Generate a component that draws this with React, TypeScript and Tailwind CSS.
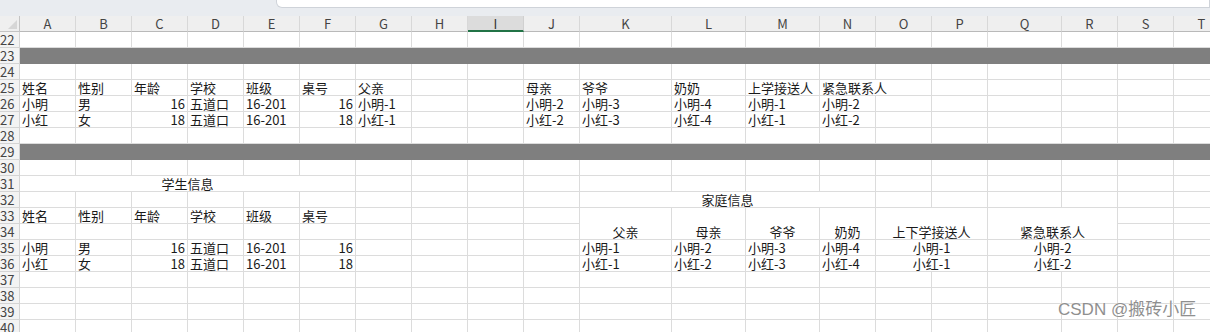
import React from 'react';

type Align = 'l' | 'r' | 'c';
type Merge = { c: number; span: number; rspan?: number; t?: string; align?: Align; fill?: boolean };

const LETTERS = ['A', 'B', 'C', 'D', 'E', 'F', 'G', 'H', 'I', 'J', 'K', 'L', 'M', 'N', 'O', 'P', 'Q', 'R', 'S', 'T'];

// plain cell values, row -> [col, text, align]
const values: Record<number, [number, string, Align?][]> = {
  25: [
    [0, '姓名'], [1, '性别'], [2, '年龄'], [3, '学校'], [4, '班级'], [5, '桌号'], [6, '父亲'],
    [9, '母亲'], [10, '爷爷'], [11, '奶奶'], [12, '上学接送人'], [13, '紧急联系人'],
  ],
  26: [
    [0, '小明'], [1, '男'], [2, '16', 'r'], [3, '五道口'], [4, '16-201'], [5, '16', 'r'], [6, '小明-1'],
    [9, '小明-2'], [10, '小明-3'], [11, '小明-4'], [12, '小明-1'], [13, '小明-2'],
  ],
  27: [
    [0, '小红'], [1, '女'], [2, '18', 'r'], [3, '五道口'], [4, '16-201'], [5, '18', 'r'], [6, '小红-1'],
    [9, '小红-2'], [10, '小红-3'], [11, '小红-4'], [12, '小红-1'], [13, '小红-2'],
  ],
  33: [[0, '姓名'], [1, '性别'], [2, '年龄'], [3, '学校'], [4, '班级'], [5, '桌号']],
  35: [
    [0, '小明'], [1, '男'], [2, '16', 'r'], [3, '五道口'], [4, '16-201'], [5, '16', 'r'],
    [10, '小明-1'], [11, '小明-2'], [12, '小明-3'], [13, '小明-4'],
  ],
  36: [
    [0, '小红'], [1, '女'], [2, '18', 'r'], [3, '五道口'], [4, '16-201'], [5, '18', 'r'],
    [10, '小红-1'], [11, '小红-2'], [12, '小红-3'], [13, '小红-4'],
  ],
};

const merges: Record<number, Merge[]> = {
  23: [{ c: 0, span: 20, fill: true }],
  29: [{ c: 0, span: 20, fill: true }],
  31: [{ c: 0, span: 6, t: '学生信息', align: 'c' }],
  32: [{ c: 10, span: 4, t: '家庭信息', align: 'c' }],
  33: [
    { c: 10, span: 1, rspan: 2, t: '父亲', align: 'c' },
    { c: 11, span: 1, rspan: 2, t: '母亲', align: 'c' },
    { c: 12, span: 1, rspan: 2, t: '爷爷', align: 'c' },
    { c: 13, span: 1, rspan: 2, t: '奶奶', align: 'c' },
    { c: 14, span: 2, rspan: 2, t: '上下学接送人', align: 'c' },
    { c: 16, span: 2, rspan: 2, t: '紧急联系人', align: 'c' },
  ],
  35: [
    { c: 14, span: 2, t: '小明-1', align: 'c' },
    { c: 16, span: 2, t: '小明-2', align: 'c' },
  ],
  36: [
    { c: 14, span: 2, t: '小红-1', align: 'c' },
    { c: 16, span: 2, t: '小红-2', align: 'c' },
  ],
};

const colSpan: Record<number, string> = { 1: '', 2: 'col-span-2', 4: 'col-span-4', 6: 'col-span-6', 20: 'col-span-20' };
const justify: Record<Align, string> = { l: 'justify-start', r: 'justify-end', c: 'justify-center' };

function Cell({ t, align = 'l', span = 1, rspan, fill }: { t?: string; align?: Align; span?: number; rspan?: number; fill?: boolean }) {
  return (
    <div
      className={`flex items-end px-[2px] whitespace-nowrap border-r border-b ${colSpan[span]} ${rspan === 2 ? 'row-span-2' : ''} ${
        fill ? 'bg-[#7f7f7f] border-[#7f7f7f]' : 'border-[#dcdcdc]'
      } ${justify[align]}`}
    >
      {t && <span className="relative z-10 bg-white leading-[15px]">{t}</span>}
    </div>
  );
}

function buildRow(r: number) {
  const out: React.ReactNode[] = [];
  const rowVals = new Map((values[r] || []).map(([c, t, a]) => [c, { t, a }]));
  const rowMerges = merges[r] || [];
  // cells already taken by row-span merges from the row above
  const covered = new Set<number>();
  (merges[r - 1] || []).forEach(m => {
    if (m.rspan === 2) for (let i = 0; i < m.span; i++) covered.add(m.c + i);
  });
  out.push(
    <div key={`h${r}`} className="bg-[#f3f3f3] border-r border-b border-[#d4d4d4] text-[#444] leading-[15px] flex items-end">
      {r}
    </div>
  );
  for (let c = 0; c < 20; c++) {
    if (covered.has(c)) continue;
    const m = rowMerges.find(x => x.c === c);
    if (m) {
      out.push(<Cell key={`${r}-${c}`} t={m.t} align={m.align} span={m.span} rspan={m.rspan} fill={m.fill} />);
      c += m.span - 1;
      continue;
    }
    const v = rowVals.get(c);
    out.push(<Cell key={`${r}-${c}`} t={v?.t} align={v?.a || 'l'} />);
  }
  return out;
}

export default function App() {
  const rows = Array.from({ length: 19 }, (_, i) => 22 + i);
  return (
    <div className="relative w-[1210px] h-[332px] overflow-hidden bg-white text-[13px] text-[#1a1a1a] font-['Noto_Sans_CJK_SC','Liberation_Sans',sans-serif]">
      {/* formula bar strip */}
      <div className="flex h-4 bg-[#e9ecf0]">
        <div className="w-[276px]" />
        <div className="flex-1 h-[8px] bg-white border border-t-0 border-[#cfd3d9] rounded-bl-md" />
      </div>

      <div className="grid w-[1230px] grid-cols-[20px_repeat(10,56px)_92px_74px_74px_56px_56px_56px_74px_56px_56px_56px] auto-rows-[16px]">
        {/* column header */}
        <div className="relative bg-[#efefef] border-r border-b border-[#c4c4c4]">
          <div className="absolute right-[2px] bottom-[2px] w-0 h-0 border-l-[9px] border-l-transparent border-b-[9px] border-b-[#d6d6d6]" />
        </div>
        {LETTERS.map(l =>
          l === 'I' ? (
            <div key={l} className="bg-[#dcdcdc] border-r border-[#d0d0d0] border-b-2 border-b-[#217346] text-center text-[#333] leading-[15px]">
              {l}
            </div>
          ) : (
            <div key={l} className="bg-[#efefef] border-r border-[#d8d8d8] border-b border-b-[#b9b9b9] text-center text-[#444] leading-[15px]">
              {l}
            </div>
          )
        )}
        {rows.map(r => buildRow(r))}
      </div>

      {/* watermark */}
      <div className="absolute left-[1058px] top-[300px] text-[17px] leading-[20px] text-[#8f8f8f] font-['Liberation_Sans','Noto_Sans_CJK_SC',sans-serif] [text-shadow:0_0_2px_#fff]">
        CSDN @搬砖小匠
      </div>
    </div>
  );
}
